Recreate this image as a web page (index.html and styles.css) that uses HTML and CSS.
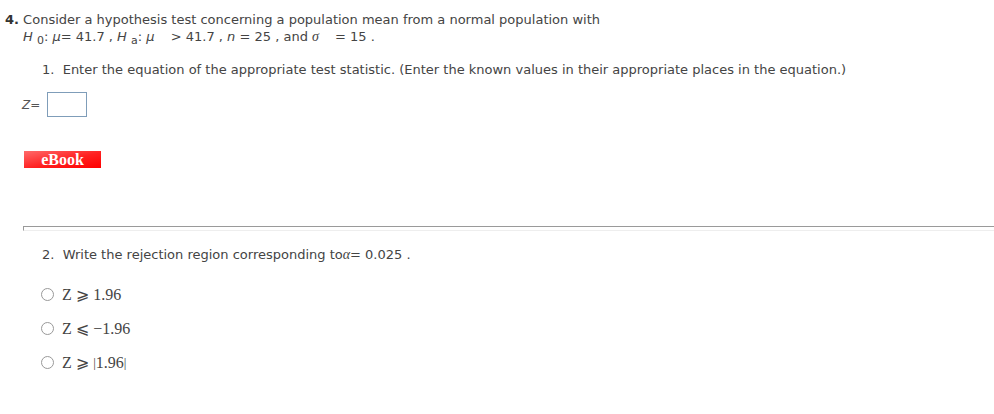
FILE: index.html
```html
<!DOCTYPE html>
<html>
<head>
<meta charset="utf-8">
<link rel="stylesheet" href="styles.css">
</head>
<body>
<div class="question">
  <div class="stem">
    <div class="line"><b>4.</b> Consider a hypothesis test concerning a population mean from a normal population with</div>
    <div class="line indent"><i>H</i> <sub>0</sub>: <i>μ</i>= 41.7 , <i>H</i> <sub>a</sub>: <i>μ</i> <span class="gap"></span>&gt; 41.7 , <i>n</i> = 25 , and <i class="sym">σ</i> <span class="gap"></span>= 15 .</div>
  </div>
  <div class="part part1">1.&nbsp; Enter the equation of the appropriate test statistic. (Enter the known values in their appropriate places in the equation.)</div>
  <div class="answer">
    <span class="zlabel">Z=</span>
    <span class="box"></span>
  </div>
  <div class="ebook">eBook</div>
  <div class="rule"></div>
  <div class="part part2">2.&nbsp; Write the rejection region corresponding to<i class="sym">α</i>= 0.025 .</div>
  <div class="options">
    <div class="option"><span class="radio"></span><span class="opt">Z <span class="rel">⩾</span> 1.96</span></div>
    <div class="option"><span class="radio"></span><span class="opt">Z <span class="rel">⩽</span> −1.96</span></div>
    <div class="option"><span class="radio"></span><span class="opt">Z <span class="rel">⩾</span> <span class="bar">|</span>1.96<span class="bar">|</span></span></div>
  </div>
</div>
</body>
</html>
```
FILE: styles.css
```css
html, body {
  margin: 0;
  padding: 0;
  background: #fff;
}
body {
  font-family: "DejaVu Sans", Verdana, sans-serif;
  font-size: 13px;
  color: #444;
}
.question {
  padding-top: 11px;
  padding-left: 5px;
}
.line {
  line-height: 17px;
  white-space: nowrap;
}
.line b {
  color: #333;
}
.indent {
  padding-left: 18px;
}
.gap {
  display: inline-block;
  width: 12px;
}
sub {
  font-size: 11px;
  vertical-align: -3px;
  line-height: 0;
}
.sym {
  font-family: "Liberation Serif", serif;
  font-size: 14px;
}
.part {
  line-height: 17px;
  padding-left: 37px;
  white-space: nowrap;
}
.part1 {
  margin-top: 16px;
}
.answer {
  display: flex;
  align-items: center;
  margin-top: 14px;
  padding-left: 17px;
  height: 25px;
}
.zlabel {
  font-size: 12px;
  color: #555;
  font-style: italic;
  width: 25px;
}
.box {
  width: 38px;
  height: 23px;
  border: 1px solid #7f9db9;
  background: #fff;
}
.ebook {
  margin-top: 34px;
  margin-left: 19px;
  width: 77px;
  height: 17px;
  background: linear-gradient(to bottom right, #ff6a6a, #ff2020 55%, #ff0000);
  color: #fff;
  font-family: "Liberation Serif", serif;
  font-weight: bold;
  font-size: 16px;
  line-height: 17px;
  text-align: center;
}
.rule {
  margin-top: 58px;
  margin-left: 18px;
  height: 3px;
  border-top: 1px solid #9a9a9a;
  border-left: 1px solid #9a9a9a;
  border-bottom: 1px solid #eeeeee;
}
.part2 {
  margin-top: 15px;
}
.options {
  margin-top: 21px;
  padding-left: 36px;
  display: flex;
  flex-direction: column;
  gap: 14px;
}
.option {
  display: flex;
  align-items: center;
  height: 20px;
}
.radio {
  width: 11px;
  height: 11px;
  border: 1px solid #999;
  border-radius: 50%;
  margin-right: 8px;
  background: #fff;
}
.opt {
  font-family: "Liberation Serif", serif;
  font-size: 16px;
  color: #444;
}
.rel {
  font-family: "DejaVu Serif", "DejaVu Sans", serif;
  font-size: 16px;
}
.bar {
  font-size: 13px;
  vertical-align: 1px;
}
```
